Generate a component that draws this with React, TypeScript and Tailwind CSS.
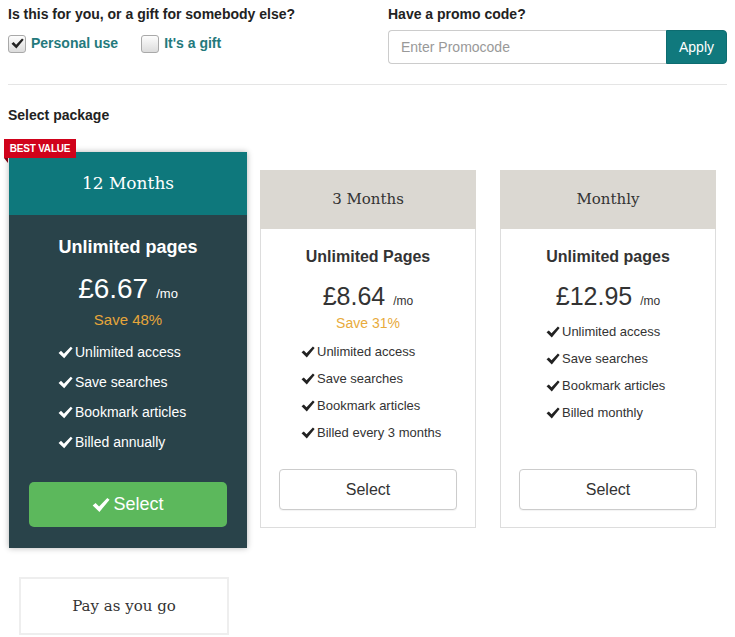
import React from 'react';

const SANS = { fontFamily: '"Liberation Sans", Arial, sans-serif' };
const SERIF = { fontFamily: '"DejaVu Serif", "Liberation Serif", serif' };

function Check({ className }: { className?: string }) {
  return (
    <svg viewBox="0 0 16 16" className={className} fill="currentColor">
      <path d="M0.6 8.4 3.2 6.2 6.3 9.4 13.6 1.8 15.6 3.4 6.6 14.2Z" />
    </svg>
  );
}

function Checkbox({ checked, label }: { checked?: boolean; label: string }) {
  return (
    <label className="flex items-center gap-[5px]">
      <span className="w-[18px] h-[18px] rounded-[3px] border border-[#a9a9a9] bg-gradient-to-b from-[#fdfdfd] to-[#dcdcdc] flex items-center justify-center">
        {checked && <Check className="w-[13px] h-[13px] text-[#222]" />}
      </span>
      <span className="text-[14px] font-bold text-[#24797c]">{label}</span>
    </label>
  );
}

const PLANS = [
  {
    name: '3 Months',
    heading: 'Unlimited Pages',
    price: '£8.64',
    save: 'Save 31%',
    indent: 'ml-[40px]',
    features: ['Unlimited access', 'Save searches', 'Bookmark articles', 'Billed every 3 months'],
  },
  {
    name: 'Monthly',
    heading: 'Unlimited pages',
    price: '£12.95',
    save: null,
    indent: 'ml-[45px]',
    features: ['Unlimited access', 'Save searches', 'Bookmark articles', 'Billed monthly'],
  },
];

export default function App() {
  return (
    <div className="bg-white min-h-[637px] px-2 pt-[6px] text-[#333]" style={SANS}>
      <div className="grid grid-cols-[380px_1fr]">
        <div>
          <div className="text-[14px] font-bold text-[#222] leading-[16px]">Is this for you, or a gift for somebody else?</div>
          <div className="flex gap-[23px] mt-[11px]">
            <Checkbox checked label="Personal use" />
            <Checkbox label="It's a gift" />
          </div>
        </div>
        <div>
          <div className="text-[14px] font-bold text-[#222] leading-[16px]">Have a promo code?</div>
          <div className="flex mt-[8px] h-[34px]">
            <input
              placeholder="Enter Promocode"
              className="flex-1 border border-[#ccc] border-r-0 rounded-l-[4px] px-[12px] text-[14px] placeholder-[#999] outline-none"
              style={SANS}
            />
            <button className="w-[61px] bg-[#10797d] text-white text-[14px] rounded-r-[4px] border border-[#0d6c70]">Apply</button>
          </div>
        </div>
      </div>

      <div className="border-t border-[#e5e5e5] mt-[20px]" />

      <div className="text-[14px] font-bold text-[#222] mt-[22px] leading-[16px]">Select package</div>

      <div className="grid grid-cols-[240px_240px_240px] mt-[29px]">
        <div className="relative">
          <div className="absolute -left-[4px] -top-[13px] z-10">
            <div className="bg-[#d0021b] text-white text-[10px] font-bold h-[19px] w-[72px] flex items-center justify-center tracking-[-0.2px]">BEST VALUE</div>
            <div className="w-0 h-0 border-t-[5px] border-t-[#7a0010] border-l-[4px] border-l-transparent" />
          </div>
          <div className="ml-[1px] w-[238px] shadow-[0_0_6px_rgba(0,0,0,0.3)]">
            <div className="h-[63px] bg-[#0e787c] text-white flex items-center justify-center text-[17px]" style={SERIF}>12 Months</div>
            <div className="bg-[#29434a] text-white flex flex-col items-center pt-[21px] pb-[21px]">
              <div className="text-[18px] font-bold leading-[22px]">Unlimited pages</div>
              <div className="mt-[14px] flex items-baseline gap-[8px]">
                <span className="text-[28px] leading-[34px]">£6.67</span>
                <span className="text-[13px]">/mo</span>
              </div>
              <div className="text-[15px] text-[#e6a63a] leading-[18px] mt-[5px]">Save 48%</div>
              <ul className="mt-[8px] self-start ml-[49px]">
                {['Unlimited access', 'Save searches', 'Bookmark articles', 'Billed annually'].map((f) => (
                  <li key={f} className="flex items-center gap-[2px] h-[30px] text-[14px]">
                    <Check className="w-[15px] h-[15px]" />
                    {f}
                  </li>
                ))}
              </ul>
              <button className="mt-[25px] w-[198px] h-[45px] bg-[#5cb85c] rounded-[5px] text-white text-[18px] flex items-center justify-center gap-[3px]">
                <Check className="w-[18px] h-[18px]" />
                Select
              </button>
            </div>
          </div>
        </div>

        {PLANS.map((p) => (
          <div key={p.name} className="px-[12px] pt-[18px]">
            <div className="h-[358px] border border-[#ddd] flex flex-col">
              <div className="h-[59px] bg-[#dbd8d2] flex items-center justify-center text-[15px] text-[#333] -m-[1px] mb-0" style={SERIF}>
                {p.name}
              </div>
              <div className="flex-1 flex flex-col items-center pt-[18px] pb-[17px]">
                <div className="text-[16px] font-bold leading-[20px] text-[#333]">{p.heading}</div>
                <div className="mt-[13px] flex items-baseline gap-[8px]">
                  <span className="text-[25px] leading-[32px] text-[#333]">{p.price}</span>
                  <span className="text-[12px]">/mo</span>
                </div>
                {p.save && <div className="text-[14px] text-[#e8ab3c] leading-[17px] mt-[3px]">{p.save}</div>}
                <ul className={`mt-[6px] self-start ${p.indent}`}>
                  {p.features.map((f) => (
                    <li key={f} className="flex items-center gap-[2px] h-[27px] text-[13px] text-[#333]">
                      <Check className="w-[14px] h-[14px] text-[#222]" />
                      {f}
                    </li>
                  ))}
                </ul>
                <button className="mt-auto w-[178px] h-[41px] border border-[#ccc] rounded-[4px] bg-white text-[16px] text-[#333] shadow-[0_1px_1px_rgba(0,0,0,0.05)]">
                  Select
                </button>
              </div>
            </div>
          </div>
        ))}
      </div>

      <div className="mt-[29px] ml-[11px] w-[210px] h-[58px] border-2 border-[#eee] flex items-center justify-center text-[15px] text-[#333]" style={SERIF}>
        Pay as you go
      </div>
    </div>
  );
}
